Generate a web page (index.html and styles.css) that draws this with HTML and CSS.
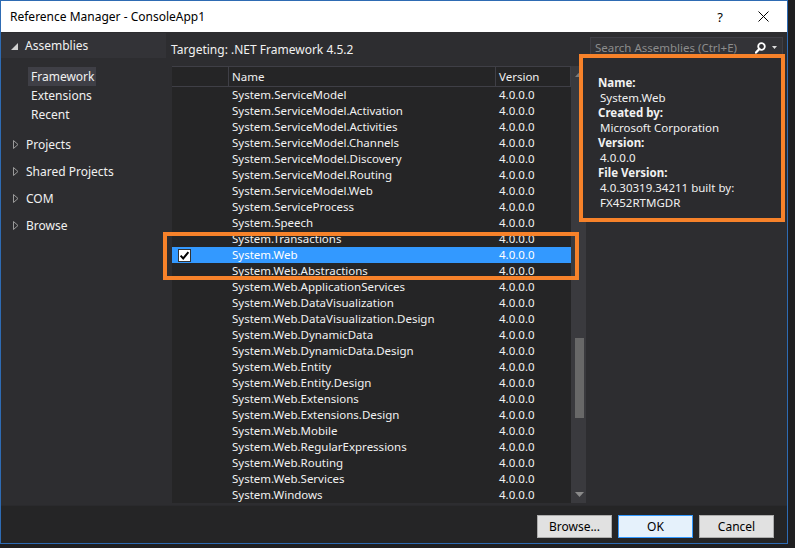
FILE: index.html
```html
<!DOCTYPE html>
<html>
<head>
<meta charset="utf-8">
<link rel="stylesheet" href="styles.css">
</head>
<body>
<div class="window">
  <div class="titlebar">
    <span class="title">Reference Manager - ConsoleApp1</span>
    <span class="help">?</span>
    <span class="close"><svg width="11" height="11" viewBox="0 0 11 11"><path d="M0.5 0.5 L10.5 10.5 M10.5 0.5 L0.5 10.5" stroke="#000" stroke-width="1"/></svg></span>
  </div>
  <div class="main">
    <div class="leftpane">
      <div class="group-head"><svg class="tri-open" width="7" height="7" viewBox="0 0 7 7"><path d="M7 0 L7 7 L0 7 Z" fill="#d0d0d0"/></svg><span>Assemblies</span></div>
      <div class="subitems">
        <div class="sub selected">Framework</div>
        <div class="sub">Extensions</div>
        <div class="sub">Recent</div>
      </div>
      <div class="groups">
        <div class="group"><svg class="tri-closed" width="6" height="9" viewBox="0 0 6 9"><path d="M0.5 0.5 L5 4.5 L0.5 8.5 Z" fill="none" stroke="#9a9a9a" stroke-width="1"/></svg><span>Projects</span></div>
        <div class="group"><svg class="tri-closed" width="6" height="9" viewBox="0 0 6 9"><path d="M0.5 0.5 L5 4.5 L0.5 8.5 Z" fill="none" stroke="#9a9a9a" stroke-width="1"/></svg><span>Shared Projects</span></div>
        <div class="group"><svg class="tri-closed" width="6" height="9" viewBox="0 0 6 9"><path d="M0.5 0.5 L5 4.5 L0.5 8.5 Z" fill="none" stroke="#9a9a9a" stroke-width="1"/></svg><span>COM</span></div>
        <div class="group"><svg class="tri-closed" width="6" height="9" viewBox="0 0 6 9"><path d="M0.5 0.5 L5 4.5 L0.5 8.5 Z" fill="none" stroke="#9a9a9a" stroke-width="1"/></svg><span>Browse</span></div>
      </div>
    </div>
    <div class="center">
      <div class="targeting">Targeting: .NET Framework 4.5.2</div>
      <div class="listbox">
        <div class="table">
          <div class="row head">
            <div class="cell c-check"></div>
            <div class="cell c-name">Name</div>
            <div class="cell c-ver">Version</div>
          </div>
          <div class="row"><div class="cell c-check"></div><div class="cell c-name">System.ServiceModel</div><div class="cell c-ver">4.0.0.0</div></div>
          <div class="row"><div class="cell c-check"></div><div class="cell c-name">System.ServiceModel.Activation</div><div class="cell c-ver">4.0.0.0</div></div>
          <div class="row"><div class="cell c-check"></div><div class="cell c-name">System.ServiceModel.Activities</div><div class="cell c-ver">4.0.0.0</div></div>
          <div class="row"><div class="cell c-check"></div><div class="cell c-name">System.ServiceModel.Channels</div><div class="cell c-ver">4.0.0.0</div></div>
          <div class="row"><div class="cell c-check"></div><div class="cell c-name">System.ServiceModel.Discovery</div><div class="cell c-ver">4.0.0.0</div></div>
          <div class="row"><div class="cell c-check"></div><div class="cell c-name">System.ServiceModel.Routing</div><div class="cell c-ver">4.0.0.0</div></div>
          <div class="row"><div class="cell c-check"></div><div class="cell c-name">System.ServiceModel.Web</div><div class="cell c-ver">4.0.0.0</div></div>
          <div class="row"><div class="cell c-check"></div><div class="cell c-name">System.ServiceProcess</div><div class="cell c-ver">4.0.0.0</div></div>
          <div class="row"><div class="cell c-check"></div><div class="cell c-name">System.Speech</div><div class="cell c-ver">4.0.0.0</div></div>
          <div class="row"><div class="cell c-check"></div><div class="cell c-name">System.Transactions</div><div class="cell c-ver">4.0.0.0</div></div>
          <div class="row sel"><div class="cell c-check"><svg class="checkbox" width="13" height="13" viewBox="0 0 13 13"><rect x="0.5" y="0.5" width="12" height="12" fill="#fff" stroke="#333"/><path d="M2.6 6.6 L5.2 9.4 L10.4 3.2" fill="none" stroke="#000" stroke-width="2"/></svg></div><div class="cell c-name">System.Web</div><div class="cell c-ver">4.0.0.0</div></div>
          <div class="row"><div class="cell c-check"></div><div class="cell c-name">System.Web.Abstractions</div><div class="cell c-ver">4.0.0.0</div></div>
          <div class="row"><div class="cell c-check"></div><div class="cell c-name">System.Web.ApplicationServices</div><div class="cell c-ver">4.0.0.0</div></div>
          <div class="row"><div class="cell c-check"></div><div class="cell c-name">System.Web.DataVisualization</div><div class="cell c-ver">4.0.0.0</div></div>
          <div class="row"><div class="cell c-check"></div><div class="cell c-name">System.Web.DataVisualization.Design</div><div class="cell c-ver">4.0.0.0</div></div>
          <div class="row"><div class="cell c-check"></div><div class="cell c-name">System.Web.DynamicData</div><div class="cell c-ver">4.0.0.0</div></div>
          <div class="row"><div class="cell c-check"></div><div class="cell c-name">System.Web.DynamicData.Design</div><div class="cell c-ver">4.0.0.0</div></div>
          <div class="row"><div class="cell c-check"></div><div class="cell c-name">System.Web.Entity</div><div class="cell c-ver">4.0.0.0</div></div>
          <div class="row"><div class="cell c-check"></div><div class="cell c-name">System.Web.Entity.Design</div><div class="cell c-ver">4.0.0.0</div></div>
          <div class="row"><div class="cell c-check"></div><div class="cell c-name">System.Web.Extensions</div><div class="cell c-ver">4.0.0.0</div></div>
          <div class="row"><div class="cell c-check"></div><div class="cell c-name">System.Web.Extensions.Design</div><div class="cell c-ver">4.0.0.0</div></div>
          <div class="row"><div class="cell c-check"></div><div class="cell c-name">System.Web.Mobile</div><div class="cell c-ver">4.0.0.0</div></div>
          <div class="row"><div class="cell c-check"></div><div class="cell c-name">System.Web.RegularExpressions</div><div class="cell c-ver">4.0.0.0</div></div>
          <div class="row"><div class="cell c-check"></div><div class="cell c-name">System.Web.Routing</div><div class="cell c-ver">4.0.0.0</div></div>
          <div class="row"><div class="cell c-check"></div><div class="cell c-name">System.Web.Services</div><div class="cell c-ver">4.0.0.0</div></div>
          <div class="row"><div class="cell c-check"></div><div class="cell c-name">System.Windows</div><div class="cell c-ver">4.0.0.0</div></div>
        </div>
        <div class="scrollbar">
          <svg class="arrow-up" width="7" height="4" viewBox="0 0 7 4"><path d="M3.5 0 L7 4 L0 4 Z" fill="#7a7a7a"/></svg>
          <div class="track"><div class="thumb"></div></div>
          <svg class="arrow-down" width="9" height="5" viewBox="0 0 9 5"><path d="M0 0 L9 0 L4.5 5 Z" fill="#8a8a8a"/></svg>
        </div>
      </div>
    </div>
    <div class="rightpane">
      <div class="search">
        <span class="placeholder">Search Assemblies (Ctrl+E)</span>
        <svg class="mag" width="11" height="12" viewBox="0 0 11 12"><circle cx="6.5" cy="4.5" r="3.3" fill="none" stroke="#fff" stroke-width="1.8"/><path d="M4.3 6.9 L1 10.6" stroke="#fff" stroke-width="2.2" stroke-linecap="round"/></svg>
        <svg class="drop" width="5" height="3" viewBox="0 0 5 3"><path d="M0 0 L5 0 L2.5 3 Z" fill="#ddd"/></svg>
      </div>
    </div>
  </div>
  <div class="footer">
    <button class="btn">Browse...</button>
    <button class="btn default">OK</button>
    <button class="btn">Cancel</button>
  </div>

  <div class="tooltip">
    <div class="tt-label">Name:</div>
    <div class="tt-val">System.Web</div>
    <div class="tt-label">Created by:</div>
    <div class="tt-val">Microsoft Corporation</div>
    <div class="tt-label">Version:</div>
    <div class="tt-val">4.0.0.0</div>
    <div class="tt-label">File Version:</div>
    <div class="tt-val">4.0.30319.34211 built by:</div>
    <div class="tt-val">FX452RTMGDR</div>
  </div>
  <div class="highlight-box"></div>
</div>
</body>
</html>
```

FILE: styles.css
```css
* { box-sizing: border-box; }
html, body { margin: 0; padding: 0; }
body {
  background: #1f1f21;
  width: 795px;
  height: 548px;
  overflow: hidden;
  font-family: "Noto Sans", "Open Sans", sans-serif;
  font-size: 11.5px;
  color: #f1f1f1;
}
.window {
  position: relative;
  width: 788px;
  height: 544px;
  border: 1px solid #2e6bb3;
  background: #2d2d30;
  display: flex;
  flex-direction: column;
}
.titlebar {
  height: 31px;
  flex: none;
  background: #ffffff;
  color: #000;
  display: flex;
  align-items: center;
  padding-left: 9px;
  font-size: 12px;
}
.title { flex: 1; }
.help { width: 14px; margin-right: 31px; font-size: 13px; text-align: center; }
.close { width: 11px; margin-right: 18px; display: flex; }

.main {
  height: 473px;
  flex: none;
  display: flex;
}
.leftpane {
  width: 165px;
  flex: none;
  padding-top: 1px;
}
.group-head {
  height: 25px;
  background: #333337;
  display: flex;
  align-items: center;
  padding-left: 10px;
}
.group-head span { margin-left: 7px; font-size: 12px; }
.tri-open { margin-top: 1px; }
.subitems {
  padding: 9px 0 0 27px;
}
.sub {
  height: 19px;
  line-height: 19px;
  padding-left: 3px;
  font-size: 12px;
  width: max-content;
  padding-right: 2px;
}
.selected { background: #3f3f46; }
.groups { padding-top: 7px; }
.group {
  height: 27px;
  display: flex;
  align-items: center;
  padding-left: 12px;
  font-size: 12px;
}
.group span { margin-left: 7px; }

.center {
  width: 420px;
  flex: none;
  display: flex;
  flex-direction: column;
}
.targeting {
  height: 34px;
  padding: 9px 0 0 5px;
  font-size: 12px;
}
.listbox {
  margin-left: 6px;
  height: 437px;
  display: flex;
  background: #252526;
}
.table { width: 399px; flex: none; }
.row {
  display: grid;
  grid-template-columns: 56px 267px 76px;
  height: 16px;
  line-height: 16px;
}
.row.head {
  height: 21px;
  line-height: 19px;
  border-bottom: 1px solid #3f3f46;
  border-top: 1px solid #3f3f46;
}
.row.head .cell { border-left: 1px solid #3f3f46; }
.row.head .c-check { border-left: none; }
.row.head .c-ver { border-right: 1px solid #3f3f46; }
.cell { white-space: nowrap; overflow: hidden; }
.c-name, .c-ver { padding-left: 4px; }
.row.head .c-name, .row.head .c-ver { padding-left: 3px; }
.row.sel { background: #3399ff; color: #fff; }
.c-check { display: flex; align-items: center; padding-left: 6px; }

.scrollbar {
  width: 15px;
  flex: none;
  background: #3a3a3e;
  display: flex;
  flex-direction: column;
  align-items: center;
}
.arrow-up { margin-top: 7px; flex: none; }
.track { flex: 1; width: 100%; padding-top: 261px; display: flex; justify-content: center; }
.thumb { width: 9px; height: 80px; background: #686868; margin-left: 1px; }
.arrow-down { margin-bottom: 6px; flex: none; margin-left: 1px; }

.rightpane {
  flex: 1;
  padding: 5px 4px 0 4px;
}
.search {
  height: 21px;
  background: #333337;
  border: 1px solid #3f3f46;
  display: flex;
  align-items: center;
  padding-left: 4px;
}
.placeholder { flex: 1; color: #8c8c8c; font-size: 11.5px; }
.mag { margin-right: 6px; }
.drop { margin-right: 5px; }

.footer {
  flex: 1;
  background: #252526;
  border-top: 1px solid #2a2a2d;
  display: flex;
  justify-content: flex-end;
  align-items: flex-start;
  padding: 9px 13px 0 0;
  gap: 6px;
}
.btn {
  width: 75px;
  height: 23px;
  background: #e1e1e1;
  border: 1px solid #adadad;
  font-family: "Noto Sans", "Open Sans", sans-serif;
  font-size: 12px;
  color: #000;
  padding: 0;
}
.btn.default {
  background: #e5f1fb;
  border: 1px solid #3399ff;
}

.tooltip {
  position: absolute;
  left: 578px;
  top: 53px;
  width: 206px;
  height: 168px;
  border: 4px solid #f7822a;
  background: #2b2b2e;
  padding: 17px 0 0 15px;
  line-height: 15px;
  font-size: 11.5px;
}
.tt-label { font-weight: bold; }
.tt-val { padding-left: 2px; }
.highlight-box {
  position: absolute;
  left: 162px;
  top: 231px;
  width: 416px;
  height: 48px;
  border: 4px solid #f7822a;
}
```
